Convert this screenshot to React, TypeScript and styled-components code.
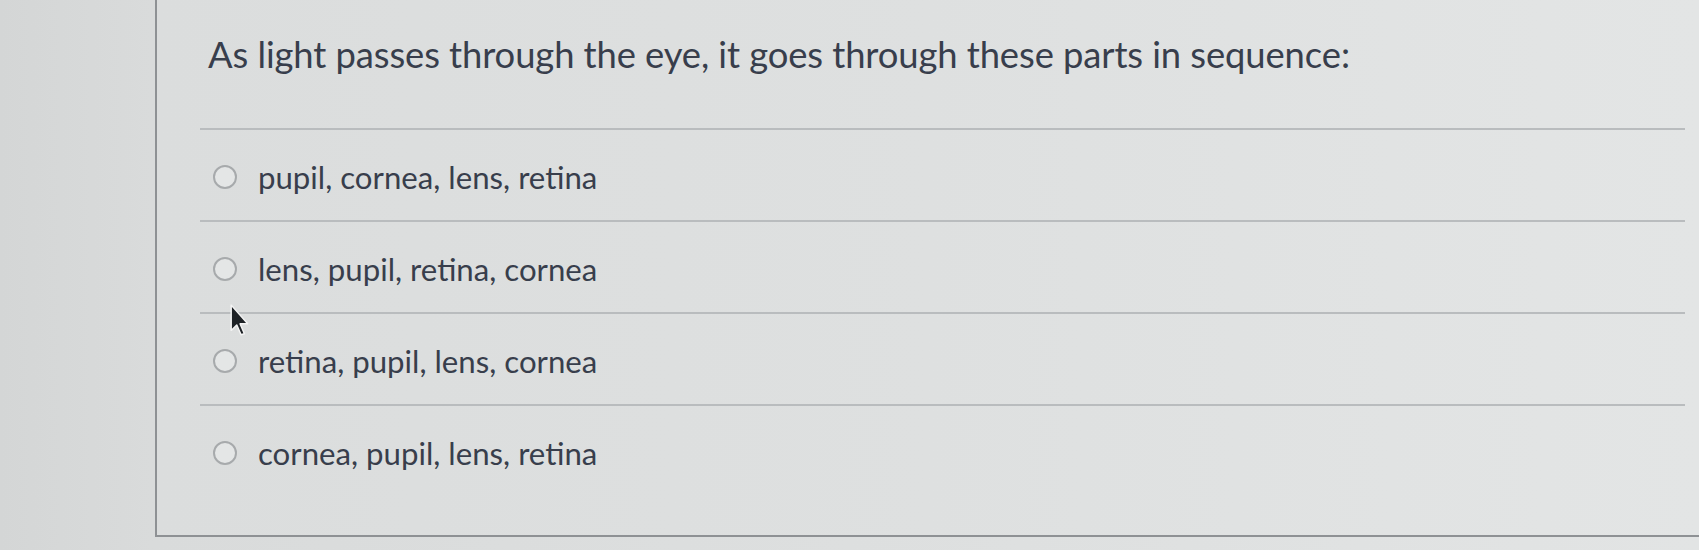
import React from "react";
import styled, { createGlobalStyle } from "styled-components";

const Global = createGlobalStyle`
  html, body {
    margin: 0;
    padding: 0;
    background: #d7d9d9;
    overflow: hidden;
  }
  * { box-sizing: border-box; }
`;

const Page = styled.div`
  position: relative;
  width: 1699px;
  height: 550px;
  padding-left: 155px;
  background: linear-gradient(90deg, #d4d6d6 0%, #d9dbdb 9%, #dcdede 40%, #e0e2e2 80%, #e2e4e4 100%);
`;

const Card = styled.section`
  height: 537px;
  border-left: 2px solid #8e9194;
  border-bottom: 2px solid #8e9194;
  background: linear-gradient(90deg, #dbdddd 0%, #dee0e0 50%, #e3e5e5 100%);
  padding: 32px 14px 0 51px;
  display: flex;
  flex-direction: column;
`;

const Question = styled.h1`
  margin: 0 0 52px 0;
  font-family: Lato, "Liberation Sans", sans-serif;
  font-weight: 400;
  font-size: 36.4px;
  line-height: 44px;
  color: #383e4c;
  letter-spacing: -0.1px;
`;

const Options = styled.div`
  display: flex;
  flex-direction: column;
  margin-left: -8px;
`;

const Row = styled.label`
  display: flex;
  align-items: center;
  height: 92px;
  border-top: 2px solid #b9bcbe;
  padding-left: 13px;
  padding-top: 4px;
`;

const Radio = styled.span`
  width: 24px;
  height: 24px;
  border-radius: 50%;
  border: 2px solid #a7aaac;
  background: #e4e6e6;
  flex: none;
  margin-right: 21px;
`;

const OptionText = styled.span`
  font-family: Lato, "Liberation Sans", sans-serif;
  font-size: 31.2px;
  color: #383e4c;
`;

const Cursor = styled.svg`
  position: absolute;
  left: 229px;
  top: 304px;
  width: 22px;
  height: 33px;
`;

const options = [
  "pupil, cornea, lens, retina",
  "lens, pupil, retina, cornea",
  "retina, pupil, lens, cornea",
  "cornea, pupil, lens, retina",
];

export default function App() {
  return (
    <>
      <Global />
      <Page>
        <Card>
          <Question>
            As light passes through the eye, it goes through these parts in sequence:
          </Question>
          <Options>
            {options.map((o) => (
              <Row key={o}>
                <Radio />
                <OptionText>{o}</OptionText>
              </Row>
            ))}
          </Options>
        </Card>
        <Cursor viewBox="0 0 20 30">
          <path
            d="M2 1 L2 24 L7 19 L11 28 L14 27 L10 18 L17 18 Z"
            fill="#1e2226"
            stroke="#f4f4f4"
            strokeWidth="1.3"
            strokeLinejoin="round"
          />
        </Cursor>
      </Page>
    </>
  );
}
